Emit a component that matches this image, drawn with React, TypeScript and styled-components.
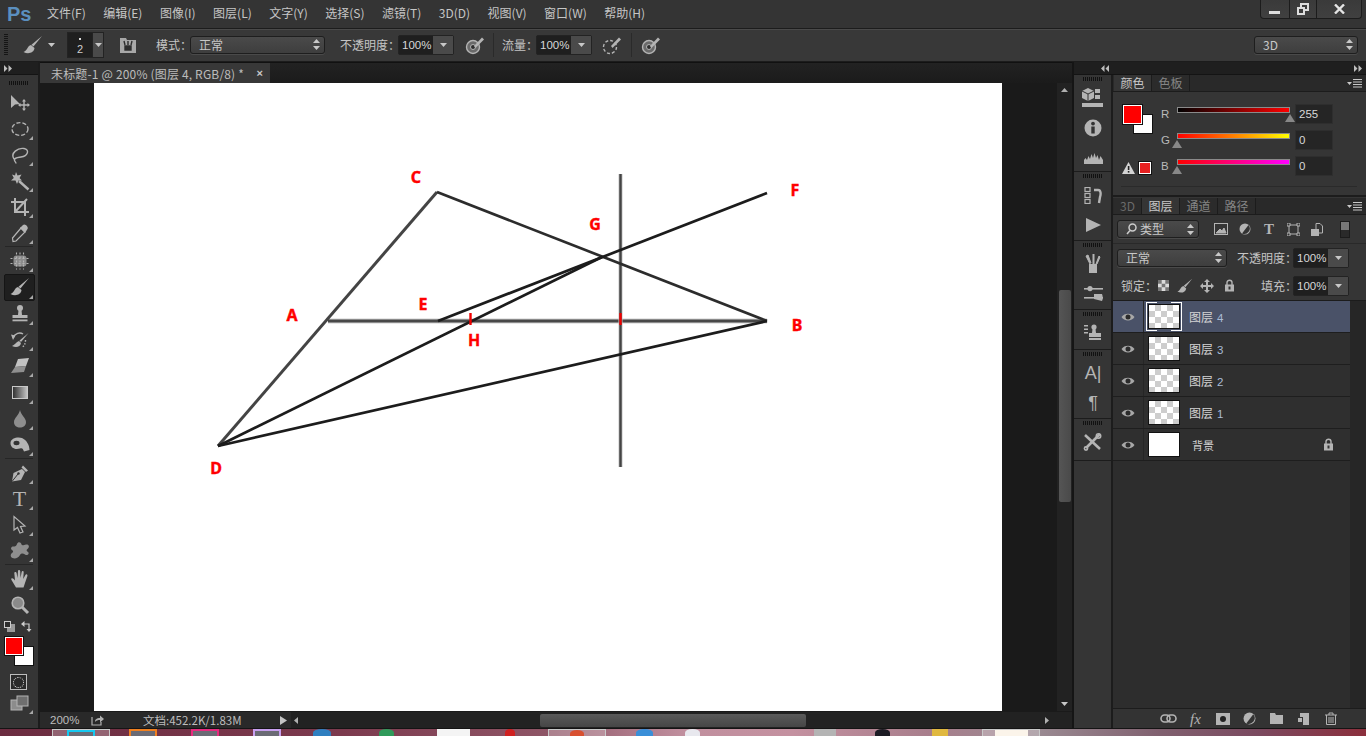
import React from 'react'
import styled, { createGlobalStyle } from 'styled-components'

const CJK = `"Noto Sans CJK SC", "Liberation Sans", sans-serif`

const GlobalStyle = createGlobalStyle`
  html, body { margin: 0; padding: 0; height: 100%; background: #1a1a1a; overflow: hidden; }
  #root { width: 1366px; height: 736px; }
  * { box-sizing: border-box; }
`

const Ink = '#b4b4b4'

type GlyphProps = { size?: number; children: React.ReactNode }

function Glyph({ size = 20, children }: GlyphProps) {
  return (
    <svg width={size} height={size} viewBox="0 0 20 20" fill={Ink} stroke="none">
      {children}
    </svg>
  )
}

const line = { fill: 'none', stroke: Ink, strokeWidth: 1.4 }

const brushPath = (
  <>
    <path d="M19 1 L10.5 11.5 L8.5 9.8 Z" />
    <path d="M8 10 C4 11 5 15 0.5 17 C5 19.5 11 18 11.5 13 Z" />
  </>
)

const toolGlyphs: Record<string, React.ReactNode> = {
  move: (
    <>
      <path d="M1 2 L1 15 L5 11.5 L10 11 Z" />
      <path d="M14 7 L14 17 M9 12 L19 12" {...line} />
      <path d="M14 6 L12 8.5 L16 8.5 Z M14 18 L12 15.5 L16 15.5 Z M8 12 L10.5 10 L10.5 14 Z M20 12 L17.5 10 L17.5 14 Z" />
    </>
  ),
  marquee: <ellipse cx="10" cy="10" rx="8" ry="6.4" fill="none" stroke={Ink} strokeWidth="1.4" strokeDasharray="4 2" />,
  lasso: <path d="M4 14 C0 8 8 2.5 14 3.5 C20 4.5 18 11 11 12 C8 12.5 5 12.5 4.5 14.5 C4 16.5 6 16.5 6 18.5" {...line} />,
  wand: (
    <>
      <path d="M9 10 L18.5 18.5" stroke={Ink} strokeWidth="2.4" />
      <path d="M6 1 L7.5 4.5 L11.5 3.5 L9.5 7 L12 9.5 L8.5 9.5 L7 13 L5.5 9.5 L1 9.5 L3.8 7 L2 3.5 L5 4.5 Z" />
    </>
  ),
  crop: <path d="M5 1 L5 15 L19 15 M1 5 L15 5 L15 19 M5 15 L17 2" {...line} strokeWidth={2} />,
  eyedropper: (
    <>
      <path d="M11 5 L15 9 L6 18 L3 18.5 L2.5 15 Z" fill="none" stroke={Ink} strokeWidth="1.2" />
      <path d="M10 5 L13 2 C15 0 19 4 17.5 6 L15 10 Z" />
    </>
  ),
  healing: (
    <>
      <rect x="3.5" y="4.5" width="13" height="11" rx="3" fill="#8c8c8c" />
      <path d="M0.5 7.5 H19.5 M0.5 12.5 H19.5 M6.5 1.5 V18.5 M10 1.5 V18.5 M13.5 1.5 V18.5" stroke={Ink} strokeWidth="1.1" strokeDasharray="2 2" fill="none" />
    </>
  ),
  brush: brushPath,
  stamp: (
    <>
      <circle cx="10" cy="4" r="3" />
      <path d="M8.5 6 H11.5 L12 11 H17.5 V14 H2.5 V11 H8 Z" />
      <rect x="2.5" y="15.5" width="15" height="1.8" />
    </>
  ),
  history: (
    <>
      <path d="M18.5 3 L11 12 L9.5 10.5 Z" />
      <path d="M9 11 C6 12 6 14 2 16 C6 18 10.5 17 11 13 Z" />
      <path d="M3 8 C5 3 10 2 13 4" {...line} />
      <path d="M1 4.5 L5.5 5.5 L3 10 Z" />
      <path d="M15.5 10 C15.5 14 14 16 12 17.5" {...line} strokeDasharray="1.5 1.5" />
    </>
  ),
  eraser: (
    <>
      <path d="M8 3 L19 2 L16 10 L5 11 Z" fill="#c2c2c2" />
      <path d="M5 11 L16 10 L14 16 L1 17 Z" fill="#8f8f8f" />
    </>
  ),
  gradient: (
    <>
      <defs>
        <linearGradient id="toolGrad" x1="0" x2="1">
          <stop offset="0" stopColor="#2c2c2c" />
          <stop offset="1" stopColor="#c8c8c8" />
        </linearGradient>
      </defs>
      <rect x="2.5" y="3.5" width="15" height="12" fill="url(#toolGrad)" stroke="#c8c8c8" />
    </>
  ),
  drop: <path d="M10 1 C11 6 16 9 16 13 C16 17 13 18.5 10 18.5 C7 18.5 4 17 4 13 C4 9 9 6 10 1 Z" fill="#8e8e8e" />,
  smudge: (
    <>
      <path d="M0.5 8 C0.5 3 8 1.5 12 3 C16.5 5 19.5 10 19.5 15 L14 16.5 C13 13.5 12 12.5 10 13.5 C5 15 0.5 13 0.5 8 Z" />
      <ellipse cx="6.5" cy="8" rx="3" ry="2.2" fill="#333" />
    </>
  ),
  pen: (
    <>
      <path d="M12 6 L15 9 L11 17 L2 18.5 L3.5 10 Z" />
      <path d="M13 2.5 L18 7.5 L16 9 L11.5 4.5 Z" />
      <path d="M2 18.5 L8 11" stroke="#333" strokeWidth="1" />
      <circle cx="8.5" cy="10.5" r="1.2" fill="#333" />
    </>
  ),
  path: <path d="M4 1.5 L4 15 L7.5 12.5 L10 18 L13 17 L10.5 11.5 L15 11 Z" fill="#333" stroke={Ink} strokeWidth="1.2" />,
  shape: (
    <path d="M7 3 C8 0.5 11 1 11.5 3.5 C12 5 14 4 16 3.5 C19 3 20 6 17.5 8 C16 9 16.5 10 18 11 C20 13 17 15 15 13.5 C13 12 11 12 10 14 C8.5 17 5 18 2.5 17 C0 16 0.5 13 2 12 C3.5 11 3.5 10 2 9 C0 7.5 1.5 5 4 5.5 C5.5 5.8 6.5 4.5 7 3 Z" fill="#8e8e8e" />
  ),
  hand: (
    <path d="M6 18.5 L1.5 11 C0.5 9 2.5 8.5 3.7 10 L5 11.5 L4.3 4 C4.3 2.5 6.4 2.5 6.6 4 L7.5 9 L8 2 C8 0.5 10 0.5 10.2 2 L10.5 9 L11.7 2.8 C12 1.4 13.8 1.8 13.7 3.3 L13.2 10 L15.4 6 C16.1 4.8 17.8 5.4 17.4 7 L15 14 L13.5 18.5 Z" />
  ),
  zoom: (
    <>
      <circle cx="8" cy="8" r="5.8" fill="#8a8a8a" stroke={Ink} strokeWidth="1.6" />
      <path d="M12 12 L18 18" stroke={Ink} strokeWidth="3" />
    </>
  ),
  screen: (
    <>
      <rect x="1" y="7" width="11" height="10" fill="#8c8c8c" stroke={Ink} strokeWidth="1" />
      <rect x="7" y="3" width="11" height="10" fill="#6f6f6f" stroke={Ink} strokeWidth="1" />
    </>
  ),
}

type ToolSpec = { id: string; corner?: boolean; active?: boolean; text?: string }

const toolGroups: ToolSpec[][] = [
  [
    { id: 'move' },
    { id: 'marquee', corner: true },
    { id: 'lasso', corner: true },
    { id: 'wand', corner: true },
    { id: 'crop', corner: true },
    { id: 'eyedropper', corner: true },
  ],
  [
    { id: 'healing', corner: true },
    { id: 'brush', corner: true, active: true },
    { id: 'stamp', corner: true },
    { id: 'history', corner: true },
    { id: 'eraser', corner: true },
    { id: 'gradient', corner: true },
    { id: 'drop', corner: true },
    { id: 'smudge', corner: true },
  ],
  [
    { id: 'pen', corner: true },
    { id: 'type', corner: true, text: 'T' },
    { id: 'path', corner: true },
    { id: 'shape', corner: true },
  ],
  [{ id: 'hand', corner: true }, { id: 'zoom' }],
]

const Shell = styled.div`
  width: 1366px;
  height: 736px;
  display: flex;
  flex-direction: column;
  overflow: hidden;
  font-family: ${CJK};
  font-size: 12px;
  color: #c6c6c6;
  background: #353535;
`

const MenuBar = styled.div`
  height: 29px;
  flex: none;
  display: flex;
  align-items: flex-start;
  background: #343434;
  border-bottom: 1px solid #1c1c1c;
`

const PsLogo = styled.div`
  width: 47px;
  padding: 2px 0 0 7px;
  font: bold 20px/24px "Liberation Sans", sans-serif;
  color: #5b8fbf;
  letter-spacing: 0;
`

const MenuList = styled.div`
  display: flex;
  gap: 17.5px;
  padding-top: 4px;
  line-height: 18px;
`

const MenuItem = styled.span`
  white-space: nowrap;
  font-size: 12px;
`

const WindowControls = styled.div`
  margin-left: auto;
  margin-right: 4px;
  width: 102px;
  height: 19px;
  display: grid;
  grid-template-columns: 28px 27px 1fr;
  border: 1px solid #1c1c1c;
  border-top: 0;
  border-radius: 0 0 4px 4px;
  background: linear-gradient(#3a3a3a, #404040);
`

const WindowButton = styled.div`
  display: flex;
  align-items: center;
  justify-content: center;
  & + & {
    border-left: 1px solid #1c1c1c;
  }
`

const OptionsBar = styled.div`
  height: 33px;
  flex: none;
  display: flex;
  align-items: center;
  padding-bottom: 2px;
  background: #383838;
  border-top: 1px solid #4a4a4a;
  border-bottom: 1px solid #1c1c1c;
`

const Grip = styled.div`
  width: 4px;
  height: 22px;
  margin-left: 4px;
  background: repeating-linear-gradient(#151515 0 1px, transparent 1px 2px);
`

const Spot = styled.div<{ $left: number; $width: number }>`
  margin-left: ${p => p.$left}px;
  width: ${p => p.$width}px;
  flex: none;
  display: flex;
  align-items: center;
  justify-content: center;
`

const Label = styled.span<{ $left: number }>`
  margin-left: ${p => p.$left}px;
  flex: none;
  white-space: nowrap;
  color: #c4c4c4;
`

const SizeBox = styled.div`
  width: 26px;
  height: 26px;
  margin-left: 10px;
  background: #1f1f1f;
  border: 1px solid #232323;
  display: flex;
  flex-direction: column;
  align-items: center;
  color: #cfcfcf;
  font: 11px/12px "Liberation Sans", sans-serif;
  padding-top: 1px;
`

const SizeDot = styled.i`
  width: 2px;
  height: 2px;
  margin: 4px 0 3px;
  background: #ddd;
`

const SizeCaret = styled.div`
  width: 11px;
  height: 26px;
  flex: none;
  background: #4a4a4a;
  border: 1px solid #232323;
  border-left: 0;
  display: flex;
  align-items: center;
  justify-content: center;
`

const Select = styled.div<{ $left?: number; $width: number; $height?: number }>`
  margin-left: ${p => p.$left ?? 0}px;
  width: ${p => p.$width}px;
  height: ${p => p.$height ?? 18}px;
  flex: none;
  display: flex;
  align-items: center;
  justify-content: space-between;
  padding: 0 4px 0 8px;
  border: 1px solid #1e1e1e;
  border-radius: 3px;
  background: linear-gradient(#4a4a4a, #3e3e3e);
  box-shadow: 0 1px 0 #4a4a4a;
  color: #c8c8c8;
  line-height: 16px;
  white-space: nowrap;
`

const ComboField = styled.div<{ $left?: number }>`
  margin-left: ${p => p.$left ?? 0}px;
  flex: none;
  width: 56px;
  height: 20px;
  display: flex;
  border: 1px solid #232323;
  border-radius: 2px;
  background: #1f1f1f;
`

const ComboValue = styled.span`
  flex: 1;
  padding-left: 3px;
  font: 11.5px/18px "Liberation Sans", sans-serif;
  color: #d8d8d8;
`

const ComboCaret = styled.span`
  width: 20px;
  background: #4a4a4a;
  display: flex;
  align-items: center;
  justify-content: center;
`

const OptionDivider = styled.i<{ $left: number }>`
  margin-left: ${p => p.$left}px;
  width: 1px;
  height: 24px;
  flex: none;
  background: #2a2a2a;
`

const Stepper = () => (
  <svg width="7" height="11" viewBox="0 0 7 11" fill="#c8c8c8">
    <path d="M3.5 0 L7 4 H0 Z M3.5 11 L0 7 H7 Z" />
  </svg>
)

const Caret = () => (
  <svg width="7" height="4" viewBox="0 0 7 4" fill="#c8c8c8">
    <path d="M0 0 H7 L3.5 4 Z" />
  </svg>
)

const AirbrushDisc = ({ crossed }: { crossed?: boolean }) => (
  <svg width="20" height="20" viewBox="0 0 20 20">
    <circle cx="8" cy="12" r="6.5" fill={crossed ? 'none' : '#6a6a6a'} stroke={Ink} strokeWidth="1.4" strokeDasharray={crossed ? '3 2' : undefined} />
    {!crossed && <circle cx="8" cy="12" r="2.5" fill="#2e2e2e" stroke={Ink} />}
    <path d="M9 11 L17 2.5 L19 4.5 L10.5 13 Z" fill={Ink} />
  </svg>
)

const Workspace = styled.div`
  height: 666px;
  flex: none;
  display: flex;
`

const ToolColumn = styled.div`
  width: 40px;
  flex: none;
  display: flex;
  flex-direction: column;
  background: #353535;
  border-right: 2px solid #1c1c1c;
`

const CollapseStrip = styled.div<{ $align?: string }>`
  height: 13px;
  flex: none;
  display: flex;
  align-items: center;
  justify-content: ${p => p.$align ?? 'flex-start'};
  padding: 0 4px;
  background: #1f1f1f;
  border-bottom: 1px solid #141414;
`

const StripGap = styled.span<{ $width?: number }>`
  width: ${p => p.$width ?? 0}px;
`

const DoubleArrow = ({ left }: { left?: boolean }) => (
  <svg width="8" height="7" viewBox="0 0 8 7" fill="#bdbdbd">
    {left ? <path d="M3.5 0 V7 L0 3.5 Z M8 0 V7 L4.5 3.5 Z" /> : <path d="M0 0 V7 L3.5 3.5 Z M4.5 0 V7 L8 3.5 Z" />}
  </svg>
)

const GripRow = styled.div<{ $height?: number }>`
  height: ${p => p.$height ?? 15}px;
  flex: none;
  display: flex;
  align-items: center;
  justify-content: center;
  &::before {
    content: '';
    width: 20px;
    height: 4px;
    background: repeating-linear-gradient(90deg, #111 0 1px, transparent 1px 2px);
  }
`

const ToolCell = styled.div<{ $active?: boolean; $height: number }>`
  height: ${p => p.$height}px;
  margin: 0 3px 0 4px;
  flex: none;
  display: flex;
  align-items: center;
  justify-content: center;
  position: relative;
  border-radius: 2px;
  background: ${p => (p.$active ? '#1f1f1f' : 'transparent')};
  border: 1px solid ${p => (p.$active ? '#151515' : 'transparent')};
  &[data-corner='true']::after {
    content: '';
    position: absolute;
    right: 1px;
    bottom: 1px;
    border-style: solid;
    border-width: 0 0 4px 4px;
    border-color: transparent transparent #a8a8a8 transparent;
  }
`

const ToolSeparator = styled.div`
  height: 2px;
  margin: 0 5px;
  flex: none;
  border-top: 1px solid #262626;
`

const SerifT = styled.span<{ $small?: boolean }>`
  font: ${p => (p.$small ? 'bold 15px/14px' : '22px/22px')} "Liberation Serif", serif;
  color: ${Ink};
`

const SwapRow = styled.div`
  height: 14px;
  margin-top: 1px;
  padding: 0 6px 0 4px;
  display: flex;
  align-items: center;
  justify-content: space-between;
  flex: none;
`

const SwatchStack = styled.div`
  width: 30px;
  height: 30px;
  margin: 3px 0 0 4px;
  flex: none;
  position: relative;
`

const Swatch = styled.div<{ $size: number; $color: string; $bottom?: boolean }>`
  position: absolute;
  width: ${p => p.$size}px;
  height: ${p => p.$size}px;
  background: ${p => p.$color};
  border: 1px solid #111;
  box-shadow: inset 0 0 0 1px #fff;
  ${p => (p.$bottom ? 'right: 0; bottom: 0;' : 'left: 0; top: 0; z-index: 1;')}
`

const QuickMask = styled.div`
  width: 17px;
  height: 16px;
  margin: 8px 0 0 10px;
  flex: none;
  background: #2a2a2a;
  border: 1px solid #bdbdbd;
  display: flex;
  align-items: center;
  justify-content: center;
  &::before {
    content: '';
    width: 9px;
    height: 9px;
    border-radius: 50%;
    border: 1px dotted #e0e0e0;
  }
`

const DocArea = styled.div`
  width: 1034px;
  flex: none;
  display: flex;
  flex-direction: column;
  background: #1a1a1a;
  border-right: 2px solid #151515;
`

const TabBar = styled.div`
  height: 21px;
  flex: none;
  display: flex;
  background: linear-gradient(#222, #1b1b1b);
  border-top: 1px solid #111;
`

const DocTab = styled.div`
  width: 230px;
  padding: 0 7px 0 11px;
  display: flex;
  align-items: center;
  justify-content: space-between;
  background: #383838;
  color: #bcbcbc;
  font-size: 12px;
  letter-spacing: 0.17px;
  white-space: nowrap;
`

const TabClose = styled.span`
  font: bold 11px/12px "Liberation Sans", sans-serif;
  color: #c8c8c8;
`

const Viewport = styled.div`
  height: 628px;
  flex: none;
  display: flex;
  padding-left: 54px;
`

const Paper = styled.div`
  width: 908px;
  height: 628px;
  flex: none;
  background: #fff;
`

const VScroll = styled.div`
  margin-left: 55px;
  width: 15px;
  flex: none;
  display: flex;
  flex-direction: column;
  align-items: center;
  background: #222;
  padding-top: 5px;
`

const VThumb = styled.div`
  width: 12px;
  height: 212px;
  margin-top: 198px;
  border-radius: 2px;
  background: linear-gradient(90deg, #555, #4a4a4a);
`

const VArrow = styled.div`
  margin-top: auto;
  margin-bottom: 5px;
  display: flex;
`

const StatusBar = styled.div`
  height: 17px;
  flex: none;
  display: flex;
  align-items: center;
  background: #292929;
  color: #bdbdbd;
  font-size: 11.5px;
  border-top: 1px solid #1a1a1a;
`

const StatusZoom = styled.span`
  width: 51px;
  padding-left: 10px;
  font: 11.5px "Liberation Sans", sans-serif;
`

const StatusInfo = styled.span`
  width: 137px;
  margin-left: 38px;
  white-space: nowrap;
`

const HTrack = styled.div`
  margin-left: 4px;
  flex: 1;
  height: 16px;
  display: flex;
  align-items: center;
  background: #222;
  padding: 0 3px;
`

const HThumb = styled.div`
  width: 266px;
  height: 13px;
  margin-left: 242px;
  border-radius: 2px;
  background: linear-gradient(#5a5a5a, #464646);
`

const HEnd = styled.div`
  margin-left: auto;
  margin-right: 20px;
  display: flex;
`

const RightDock = styled.div`
  flex: 1;
  display: flex;
  flex-direction: column;
  background: #353535;
`

const DockBody = styled.div`
  flex: 1;
  display: flex;
`

const IconDock = styled.div`
  width: 39px;
  flex: none;
  display: flex;
  flex-direction: column;
  border-right: 2px solid #1c1c1c;
  background: #353535;
`

const DockGroup = styled.div<{ $height: number }>`
  height: ${p => p.$height}px;
  flex: none;
  display: flex;
  flex-direction: column;
  border-bottom: 1px solid #1c1c1c;
`

const DockCell = styled.div`
  height: 30px;
  flex: none;
  display: flex;
  align-items: center;
  justify-content: center;
  padding-left: 1px;
`

const DockLetter = styled.span`
  font: 18px/20px "Liberation Sans", sans-serif;
  color: ${Ink};
`

const Panels = styled.div`
  flex: 1;
  display: flex;
  flex-direction: column;
  background: #353535;
`

const ColorPanel = styled.section`
  height: 122px;
  flex: none;
  display: flex;
  flex-direction: column;
  border-bottom: 2px solid #1c1c1c;
`

const PanelTabs = styled.div`
  height: 17px;
  flex: none;
  display: flex;
  align-items: stretch;
  background: #292929;
  border-bottom: 1px solid #1c1c1c;
  padding-left: 1px;
`

const PanelTab = styled.div<{ $active?: boolean; $faded?: boolean }>`
  width: ${p => (p.$faded ? 28 : 38)}px;
  display: flex;
  align-items: center;
  justify-content: center;
  font-size: 12px;
  line-height: 16px;
  background: ${p => (p.$active ? '#353535' : '#2b2b2b')};
  border-right: 1px solid #1c1c1c;
  color: ${p => (p.$active ? '#c8c8c8' : p.$faded ? '#6a6a6a' : '#858585')};
`

const PanelMenu = styled.div`
  margin-left: auto;
  padding-right: 4px;
  display: flex;
  align-items: center;
`

const ColorBody = styled.div`
  flex: 1;
  display: grid;
  grid-template-columns: 36px 1fr;
  padding: 12px 0 0 9px;
  position: relative;
`

const ColorChips = styled.div`
  display: flex;
  flex-direction: column;
`

const BigSwatches = styled.div`
  width: 31px;
  height: 30px;
  position: relative;
`

const GamutRow = styled.div`
  margin-top: 27px;
  display: flex;
  align-items: center;
  gap: 3px;
`

const GamutChip = styled.div`
  width: 14px;
  height: 14px;
  background: #e62020;
  border: 1px solid #111;
  box-shadow: inset 0 0 0 1px #fff;
`

const SliderList = styled.div`
  display: flex;
  flex-direction: column;
  gap: 6px;
`

const SliderRow = styled.div`
  height: 20px;
  display: flex;
  gap: 6px;
`

const SliderName = styled.span`
  width: 10px;
  padding-top: 3px;
  margin-left: 3px;
  font: 11.5px/14px "Liberation Sans", sans-serif;
  color: #b9b9b9;
`

const SliderTrack = styled.div<{ $ramp: string }>`
  width: 113px;
  height: 6px;
  margin-top: 3px;
  position: relative;
  border: 1px solid #8a8a8a;
  background: linear-gradient(90deg, ${p => p.$ramp});
`

const SliderKnob = styled.i<{ $end?: boolean }>`
  position: absolute;
  top: 6px;
  ${p => (p.$end ? 'right: -6px;' : 'left: -6px;')}
  width: 0;
  height: 0;
  border-left: 5px solid transparent;
  border-right: 5px solid transparent;
  border-bottom: 8px solid #888;
`

const NumberField = styled.div`
  width: 38px;
  height: 20px;
  margin-left: -1px;
  background: #252525;
  border: 1px solid #2e2e2e;
  padding-left: 3px;
  font: 11.5px/18px "Liberation Sans", sans-serif;
  color: #d8d8d8;
`

const PanelRule = styled.i`
  position: absolute;
  left: 8px;
  right: 9px;
  bottom: 8px;
  height: 1px;
  background: #2a2a2a;
`

const LayersPanel = styled.section`
  margin-top: 1px;
  flex: 1;
  display: flex;
  flex-direction: column;
  min-height: 0;
`

const ToolRow = styled.div<{ $height: number; $line?: boolean }>`
  height: ${p => p.$height}px;
  flex: none;
  display: flex;
  align-items: center;
  padding: 0 0 0 4px;
  border-bottom: 1px solid ${p => (p.$line ? '#292929' : 'transparent')};
`

const FilterIcon = styled.div<{ $first?: boolean }>`
  width: 24px;
  margin-left: ${p => (p.$first ? 10 : 0)}px;
  display: flex;
  justify-content: center;
  flex: none;
`

const SwitchLamp = styled.div`
  width: 10px;
  height: 17px;
  margin-left: 11px;
  border: 1px solid #1c1c1c;
  background: linear-gradient(#777 0 50%, #2a2a2a 50%);
`

const FilterLabel = styled.span`
  display: flex;
  align-items: center;
  gap: 3px;
`

const LockLabel = styled.span`
  width: 35px;
  padding-left: 4px;
  flex: none;
  white-space: nowrap;
  overflow: visible;
`

const LockIcon = styled.span`
  width: 22px;
  flex: none;
  display: flex;
  justify-content: center;
`

const LayerArea = styled.div`
  flex: 1;
  display: flex;
  min-height: 0;
  border-top: 1px solid #1c1c1c;
`

const LayerList = styled.div`
  width: 237px;
  flex: none;
  display: flex;
  flex-direction: column;
  background: #2d2d2d;
`

const LayerRow = styled.div<{ $selected?: boolean }>`
  height: 32px;
  flex: none;
  display: flex;
  align-items: center;
  border-bottom: 1px solid #1e1e1e;
  background: ${p => (p.$selected ? '#4a5268' : '#2f2f2f')};
`

const EyeCell = styled.div`
  width: 31px;
  height: 100%;
  flex: none;
  display: flex;
  align-items: center;
  justify-content: center;
  border-right: 1px solid #262626;
`

const bracket = (x: string, y: string, w: string, h: string) =>
  `linear-gradient(#fff, #fff) ${x} ${y} / ${w} ${h} no-repeat`

const Thumb = styled.div<{ $plain?: boolean; $selected?: boolean }>`
  width: 32px;
  height: 25px;
  margin-left: 4px;
  flex: none;
  border: 1px solid #111;
  position: relative;
  background: ${p =>
    p.$plain ? '#fff' : 'repeating-conic-gradient(#cdcdcd 0 25%, #fff 0 50%) 0 0 / 12px 12px'};
  ${p =>
    p.$selected
      ? `&::after {
          content: '';
          position: absolute;
          inset: -3px;
          background: ${[
            bracket('0', '0', '11px', '1px'),
            bracket('100%', '0', '11px', '1px'),
            bracket('0', '100%', '11px', '1px'),
            bracket('100%', '100%', '11px', '1px'),
            bracket('0', '0', '1px', '100%'),
            bracket('100%', '0', '1px', '100%'),
          ].join(', ')};
        }`
      : ''}
`

const LayerName = styled.span`
  margin-left: 9px;
  color: #d4d4d4;
  white-space: nowrap;
`

const BackgroundName = styled(LayerName)`
  margin-left: 12px;
  font-size: 11px;
`

const LayerIndex = styled.span`
  margin-left: 4px;
  font: 11.5px "Liberation Sans", sans-serif;
  color: #a9bcd6;
`

const LayerLock = styled.span`
  margin-left: auto;
  margin-right: 16px;
  display: flex;
`

const LayerScroll = styled.div`
  flex: 1;
  background: #262626;
`

const LayerFooter = styled.div`
  height: 20px;
  flex: none;
  padding-left: 47px;
  display: flex;
  align-items: center;
  gap: 10px;
  background: #333;
  border-top: 1px solid #1c1c1c;
`

const FooterIcon = styled.span`
  width: 17px;
  flex: none;
  display: flex;
  justify-content: center;
  font: italic 15px/16px "Liberation Serif", serif;
  color: ${Ink};
`

const Taskbar = styled.div`
  height: 8px;
  flex: none;
  display: flex;
  overflow: hidden;
  border-top: 1px solid #141414;
  background: linear-gradient(90deg, #6b2c40 0, #7c3a4e 25%, #8e5566 40%, #c08f9e 50%, #c491a0 58%, #a87e8c 68%, #9a8a92 76%, #80606f 85%, #7b4a60 92%, #8b2f3c 100%);
`

const TaskThumb = styled.div<{ $left: number; $color: string }>`
  margin-left: ${p => p.$left}px;
  width: 28px;
  height: 7px;
  flex: none;
  border: 2px solid ${p => p.$color};
  border-bottom: 0;
  background: #6b6b75;
`

const TaskBlip = styled.div<{ $left: number; $width: number; $color: string; $round?: boolean }>`
  margin-left: ${p => p.$left}px;
  width: ${p => p.$width}px;
  height: 7px;
  flex: none;
  background: ${p => p.$color};
  border-radius: ${p => (p.$round ? '50% 50% 0 0' : '0')};
`

const TaskActive = styled.div<{ $left: number }>`
  margin-left: ${p => p.$left}px;
  width: 58px;
  flex: none;
  display: flex;
  justify-content: center;
  background: rgba(255, 255, 255, 0.25);
  border: 1px solid #c9c9c9;
  border-bottom: 0;
`

const menus = ['文件(F)', '编辑(E)', '图像(I)', '图层(L)', '文字(Y)', '选择(S)', '滤镜(T)', '3D(D)', '视图(V)', '窗口(W)', '帮助(H)']

const Eye = () => (
  <svg width="14" height="10" viewBox="0 0 14 10">
    <path d="M0.5 5 C3 0.5 11 0.5 13.5 5 C11 9.5 3 9.5 0.5 5 Z" fill="#a8a8a8" />
    <circle cx="7" cy="5" r="2.5" fill="#2b2b2b" />
  </svg>
)

const Padlock = ({ color = Ink }: { color?: string }) => (
  <svg width="11" height="13" viewBox="0 0 11 13" fill={color}>
    <path d="M3 6 V3.5 C3 0.5 8 0.5 8 3.5 V6" fill="none" stroke={color} strokeWidth="1.4" />
    <rect x="1" y="5.5" width="9" height="7" />
    <rect x="4.5" y="7.5" width="2" height="3" fill="#333" />
  </svg>
)

const MenuLines = () => (
  <svg width="15" height="9" viewBox="0 0 15 9" fill="#c8c8c8">
    <path d="M0 3 H5 L2.5 6 Z M6 0 H15 V1 H6 Z M6 2.5 H15 V3.5 H6 Z M6 5 H15 V6 H6 Z M6 7.5 H15 V8.5 H6 Z" />
  </svg>
)

const labels: [string, number, number][] = [
  ['C', 416, 183],
  ['A', 292, 321],
  ['E', 423, 310],
  ['H', 474, 346],
  ['D', 216, 474],
  ['G', 595, 230],
  ['F', 795, 196],
  ['B', 797, 331],
]

function Drawing() {
  return (
    <svg width="908" height="628" viewBox="94 83 908 628">
      <g style={{ filter: 'blur(0.7px)' }} fill="none" strokeLinecap="butt">
        <path d="M328 321 H767" stroke="#cfcfcf" strokeWidth="5" />
        <path d="M328 321 H767" stroke="#484848" strokeWidth="2.8" />
        <path d="M620.5 174 V467" stroke="#c4c4c4" strokeWidth="4" />
        <path d="M620.5 174 V467" stroke="#444" strokeWidth="2.4" />
        <path d="M437 192 L218 446" stroke="#444" strokeWidth="3" />
        <path d="M437 192 L767 321" stroke="#2c2c2c" strokeWidth="2.7" />
        <path d="M218 446 L767 321" stroke="#1c1c1c" strokeWidth="2.7" />
        <path d="M218 446 L602 257" stroke="#1c1c1c" strokeWidth="2.7" />
        <path d="M438 321 L767 193" stroke="#1c1c1c" strokeWidth="2.7" />
      </g>
      <path d="M470.5 313 V325 M620.5 313 V325" stroke="#f00000" strokeWidth="2.4" />
      {labels.map(([name, x, y]) => (
        <text
          key={name}
          x={x}
          y={y}
          textAnchor="middle"
          fill="#f00"
          stroke="#f00"
          strokeWidth="0.4"
          fontFamily='"Noto Sans", sans-serif'
          fontWeight="700"
          fontSize="16"
        >
          {name}
        </text>
      ))}
    </svg>
  )
}

export default function App() {
  return (
    <Shell>
      <GlobalStyle />
      <MenuBar>
        <PsLogo>Ps</PsLogo>
        <MenuList>
          {menus.map(m => (
            <MenuItem key={m}>{m}</MenuItem>
          ))}
        </MenuList>
        <WindowControls>
          <WindowButton>
            <svg width="12" height="12" viewBox="0 0 12 12" fill="#ddd">
              <rect x="0" y="8" width="11" height="3" />
            </svg>
          </WindowButton>
          <WindowButton>
            <svg width="12" height="12" viewBox="0 0 12 12" fill="none" stroke="#ddd" strokeWidth="2">
              <rect x="4" y="1" width="7" height="6" />
              <rect x="1" y="5" width="6" height="6" fill="#3c3c3c" />
            </svg>
          </WindowButton>
          <WindowButton>
            <svg width="11" height="10" viewBox="0 0 11 10" stroke="#e4e4e4" strokeWidth="2.4">
              <path d="M1 0.5 L10 9.5 M10 0.5 L1 9.5" />
            </svg>
          </WindowButton>
        </WindowControls>
      </MenuBar>

      <OptionsBar>
        <Grip />
        <Spot $left={13} $width={24}>
          <Glyph>{brushPath}</Glyph>
        </Spot>
        <Spot $left={0} $width={12}>
          <Caret />
        </Spot>
        <SizeBox>
          <SizeDot />2
        </SizeBox>
        <SizeCaret>
          <Caret />
        </SizeCaret>
        <Spot $left={15} $width={18}>
          <svg width="16" height="16" viewBox="0 0 16 16">
            <path d="M0 1 H6 L7 3 H16 V16 H0 Z" fill="#a8a8a8" />
            <path d="M4 4 L5 8 M8 4 V8 M12 4 L11 8 M5 9 H11 V13 H5 Z" stroke="#2e2e2e" strokeWidth="1.4" fill="#2e2e2e" />
          </svg>
        </Spot>
        <Label $left={19}>模式：</Label>
        <Select $left={-2} $width={135}>
          正常
          <Stepper />
        </Select>
        <Label $left={15}>不透明度：</Label>
        <ComboField $left={-2}>
          <ComboValue>100%</ComboValue>
          <ComboCaret>
            <Caret />
          </ComboCaret>
        </ComboField>
        <Spot $left={11} $width={20}>
          <AirbrushDisc />
        </Spot>
        <OptionDivider $left={8} />
        <Label $left={8}>流量：</Label>
        <ComboField $left={-2}>
          <ComboValue>100%</ComboValue>
          <ComboCaret>
            <Caret />
          </ComboCaret>
        </ComboField>
        <Spot $left={10} $width={20}>
          <AirbrushDisc crossed />
        </Spot>
        <OptionDivider $left={9} />
        <Spot $left={9} $width={20}>
          <AirbrushDisc />
        </Spot>
        <Select $left={593} $width={104}>
          3D
          <Stepper />
        </Select>
      </OptionsBar>

      <Workspace>
        <ToolColumn>
          <CollapseStrip>
            <DoubleArrow />
          </CollapseStrip>
          <GripRow />
          {toolGroups.map((group, gi) => (
            <React.Fragment key={gi}>
              {gi > 0 && <ToolSeparator />}
              {group.map(tool => (
                <ToolCell key={tool.id} $height={gi === 1 ? 26.3 : 26} $active={tool.active} data-corner={tool.corner ? 'true' : 'false'}>
                  {tool.text ? <SerifT>{tool.text}</SerifT> : <Glyph>{toolGlyphs[tool.id]}</Glyph>}
                </ToolCell>
              ))}
            </React.Fragment>
          ))}
          <SwapRow>
            <svg width="11" height="11" viewBox="0 0 11 11">
              <rect x="3" y="3" width="8" height="8" fill="#9a9a9a" />
              <rect x="0.5" y="0.5" width="6" height="6" fill="#2c2c2c" stroke="#ccc" />
            </svg>
            <svg width="11" height="11" viewBox="0 0 11 11" fill="none" stroke="#ccc" strokeWidth="1.2">
              <path d="M2 3 H8 V9" />
              <path d="M3.5 0 V6 L0 3 Z M5.5 8 H10.5 L8 11 Z" fill="#ccc" stroke="none" />
            </svg>
          </SwapRow>
          <SwatchStack>
            <Swatch $size={20} $color="#ff0000" />
            <Swatch $size={20} $color="#ffffff" $bottom />
          </SwatchStack>
          <QuickMask />
          <ToolCell $height={26} data-corner="true">
            <Glyph>{toolGlyphs.screen}</Glyph>
          </ToolCell>
        </ToolColumn>

        <DocArea>
          <TabBar>
            <DocTab>
              未标题-1 @ 200% (图层 4, RGB/8) *<TabClose>×</TabClose>
            </DocTab>
          </TabBar>
          <Viewport>
            <Paper>
              <Drawing />
            </Paper>
            <VScroll>
              <svg width="7" height="4" viewBox="0 0 7 4" fill="#b0b0b0">
                <path d="M3.5 0 L7 4 H0 Z" />
              </svg>
              <VThumb />
              <VArrow>
                <Caret />
              </VArrow>
            </VScroll>
          </Viewport>
          <StatusBar>
            <StatusZoom>200%</StatusZoom>
            <svg width="14" height="12" viewBox="0 0 14 12" fill="none" stroke="#b0b0b0" strokeWidth="1.2">
              <path d="M1 3 V11 H10 V8" />
              <path d="M4 8 C4 5 6 4 9 4 V1.5 L13 5 L9 8.5 V6 C7 6 5 6.5 4 8 Z" fill="#b0b0b0" stroke="none" />
            </svg>
            <StatusInfo>文档:452.2K/1.83M</StatusInfo>
            <svg width="7" height="9" viewBox="0 0 7 9" fill="#c4c4c4">
              <path d="M0 0 L7 4.5 L0 9 Z" />
            </svg>
            <HTrack>
              <svg width="4" height="7" viewBox="0 0 4 7" fill="#b0b0b0">
                <path d="M4 0 V7 L0 3.5 Z" />
              </svg>
              <HThumb />
              <HEnd>
                <svg width="4" height="7" viewBox="0 0 4 7" fill="#b0b0b0">
                  <path d="M0 0 V7 L4 3.5 Z" />
                </svg>
              </HEnd>
            </HTrack>
          </StatusBar>
        </DocArea>

        <RightDock>
          <CollapseStrip $align="space-between">
            <span />
            <DoubleArrow left />
            <StripGap $width={200} />
            <DoubleArrow />
          </CollapseStrip>
          <DockBody>
            <IconDock>
              <DockGroup $height={97}>
                <GripRow $height={8} />
                <DockCell>
                  <svg width="22" height="20" viewBox="0 0 22 20" fill={Ink}>
                    <path d="M6 0 L12 3 V10 L6 13 L0 10 V3 Z" />
                    <path d="M0 3 L6 6 L12 3 M6 6 V13" stroke="#333" fill="none" />
                    <rect x="13" y="1" width="5" height="4" />
                    <rect x="13" y="7" width="5" height="4" />
                    <rect x="0" y="15" width="21" height="4" />
                  </svg>
                </DockCell>
                <DockCell>
                  <svg width="18" height="18" viewBox="0 0 18 18">
                    <circle cx="9" cy="9" r="8.5" fill="#b4b4b4" />
                    <rect x="7.3" y="7.5" width="3.4" height="7" fill="#333" />
                    <circle cx="9" cy="4.6" r="1.9" fill="#333" />
                  </svg>
                </DockCell>
                <DockCell>
                  <svg width="19" height="11" viewBox="0 0 19 11" fill={Ink}>
                    <path d="M0 11 V7 L1.5 5 L3 7 L4.5 3 L6 6 L7.5 1 L9 5 L10.5 0 L12 5 L13.5 2 L15 7 L16.5 3 L19 7 V11 Z" />
                  </svg>
                </DockCell>
              </DockGroup>
              <DockGroup $height={69}>
                <GripRow $height={8} />
                <DockCell>
                  <svg width="18" height="17" viewBox="0 0 18 17" fill="none" stroke={Ink} strokeWidth="1.2">
                    <rect x="1" y="0.5" width="5" height="4" />
                    <rect x="1" y="6.5" width="5" height="4" />
                    <rect x="1" y="12.5" width="5" height="4" />
                    <path d="M10 3 H14 C17 3 17 7 16 10 L15 16" strokeWidth="2.4" />
                  </svg>
                </DockCell>
                <DockCell>
                  <svg width="15" height="14" viewBox="0 0 15 14" fill={Ink}>
                    <path d="M0 0 L15 7 L0 14 Z" />
                  </svg>
                </DockCell>
              </DockGroup>
              <DockGroup $height={69}>
                <GripRow $height={8} />
                <DockCell>
                  <svg width="16" height="20" viewBox="0 0 16 20" fill={Ink}>
                    <rect x="4" y="10" width="8" height="9" />
                    <path d="M5 10 L1 2 L3 1 L6 9 M8 10 V0 H9 V10 M11 10 L14 2 L15 3 L12 10" stroke={Ink} />
                  </svg>
                </DockCell>
                <DockCell>
                  <svg width="19" height="16" viewBox="0 0 19 16" fill={Ink}>
                    <rect x="0" y="2" width="19" height="1.6" />
                    <circle cx="6" cy="2.6" r="2.6" />
                    <rect x="0" y="11" width="19" height="1.6" />
                    <path d="M10 8 L18 8 C19 11 19 13 18 15 L10 13 Z" />
                  </svg>
                </DockCell>
              </DockGroup>
              <DockGroup $height={40}>
                <GripRow $height={8} />
                <DockCell>
                  <svg width="18" height="18" viewBox="0 0 18 18" fill={Ink}>
                    <path d="M0 1 H4 V2.4 H0 Z M0 4.5 H4 V5.9 H0 Z M0 8 H4 V9.4 H0 Z" />
                    <circle cx="10" cy="3" r="2.6" />
                    <path d="M8.5 5 H11.5 L12 9 H17 V13 H5 V9 H8 Z" />
                    <rect x="5" y="14" width="12" height="2" />
                  </svg>
                </DockCell>
              </DockGroup>
              <DockGroup $height={69}>
                <GripRow $height={8} />
                <DockCell>
                  <DockLetter>A|</DockLetter>
                </DockCell>
                <DockCell>
                  <DockLetter>¶</DockLetter>
                </DockCell>
              </DockGroup>
              <DockGroup $height={42}>
                <GripRow $height={8} />
                <DockCell>
                  <svg width="20" height="18" viewBox="0 0 20 18" fill="none" stroke={Ink} strokeWidth="2.6">
                    <path d="M2 2 L17 16" />
                    <path d="M17 1 L3 15" />
                    <circle cx="15.5" cy="3" r="2.2" strokeWidth="1.6" />
                    <circle cx="3" cy="15.5" r="1.6" strokeWidth="1.6" />
                  </svg>
                </DockCell>
              </DockGroup>
            </IconDock>

            <Panels>
              <ColorPanel>
                <PanelTabs>
                  <PanelTab $active>颜色</PanelTab>
                  <PanelTab>色板</PanelTab>
                  <PanelMenu>
                    <MenuLines />
                  </PanelMenu>
                </PanelTabs>
                <ColorBody>
                  <ColorChips>
                    <BigSwatches>
                      <Swatch $size={21} $color="#ff0000" />
                      <Swatch $size={20} $color="#ffffff" $bottom />
                    </BigSwatches>
                    <GamutRow>
                      <svg width="13" height="12" viewBox="0 0 13 12">
                        <path d="M6.5 0 L13 12 H0 Z" fill="#d4d4d4" />
                        <rect x="5.8" y="4" width="1.6" height="4" fill="#222" />
                        <rect x="5.8" y="9" width="1.6" height="1.6" fill="#222" />
                      </svg>
                      <GamutChip />
                    </GamutRow>
                  </ColorChips>
                  <SliderList>
                    <SliderRow>
                      <SliderName>R</SliderName>
                      <SliderTrack $ramp="#000, #f00">
                        <SliderKnob $end />
                      </SliderTrack>
                      <NumberField>255</NumberField>
                    </SliderRow>
                    <SliderRow>
                      <SliderName>G</SliderName>
                      <SliderTrack $ramp="#f00, #ff0">
                        <SliderKnob />
                      </SliderTrack>
                      <NumberField>0</NumberField>
                    </SliderRow>
                    <SliderRow>
                      <SliderName>B</SliderName>
                      <SliderTrack $ramp="#f00, #f0f">
                        <SliderKnob />
                      </SliderTrack>
                      <NumberField>0</NumberField>
                    </SliderRow>
                  </SliderList>
                  <PanelRule />
                </ColorBody>
              </ColorPanel>

              <LayersPanel>
                <PanelTabs>
                  <PanelTab $faded>3D</PanelTab>
                  <PanelTab $active>图层</PanelTab>
                  <PanelTab>通道</PanelTab>
                  <PanelTab>路径</PanelTab>
                  <PanelMenu>
                    <MenuLines />
                  </PanelMenu>
                </PanelTabs>
                <ToolRow $height={29} $line>
                  <Select $width={82}>
                    <FilterLabel>
                      <svg width="11" height="12" viewBox="0 0 11 12" fill="none" stroke="#ccc" strokeWidth="1.5">
                        <circle cx="6.5" cy="4.5" r="3.5" />
                        <path d="M4 7.5 L1 11" />
                      </svg>
                      类型
                    </FilterLabel>
                    <Stepper />
                  </Select>
                  <FilterIcon $first>
                    <svg width="14" height="12" viewBox="0 0 14 12" fill="none" stroke={Ink}>
                      <rect x="0.5" y="0.5" width="13" height="11" />
                      <path d="M2 10 L6 6 L8 8 L10 5 L12 10 Z" fill={Ink} />
                    </svg>
                  </FilterIcon>
                  <FilterIcon>
                    <svg width="12" height="12" viewBox="0 0 12 12">
                      <circle cx="6" cy="6" r="5.5" fill={Ink} />
                      <path d="M9.5 2 A5.5 5.5 0 0 1 3 10.5 Z" fill="#333" />
                    </svg>
                  </FilterIcon>
                  <FilterIcon>
                    <SerifT $small>T</SerifT>
                  </FilterIcon>
                  <FilterIcon>
                    <svg width="13" height="13" viewBox="0 0 13 13" fill="none" stroke={Ink}>
                      <rect x="2" y="2" width="9" height="9" />
                      <path d="M0 0 H3 V3 H0 Z M10 0 H13 V3 H10 Z M0 10 H3 V13 H0 Z M10 10 H13 V13 H10 Z" fill="#333" />
                    </svg>
                  </FilterIcon>
                  <FilterIcon>
                    <svg width="12" height="13" viewBox="0 0 12 13" fill="none" stroke={Ink}>
                      <path d="M5 6 V0.5 H9 L11.5 3 V10 H8" />
                      <rect x="0.5" y="6.5" width="7" height="6" fill={Ink} />
                    </svg>
                  </FilterIcon>
                  <SwitchLamp />
                </ToolRow>
                <ToolRow $height={28}>
                  <Select $width={110} $height={18}>
                    正常
                    <Stepper />
                  </Select>
                  <Label $left={10}>不透明度：</Label>
                  <ComboField $left={-4}>
                    <ComboValue>100%</ComboValue>
                    <ComboCaret>
                      <Caret />
                    </ComboCaret>
                  </ComboField>
                </ToolRow>
                <ToolRow $height={28}>
                  <LockLabel>锁定：</LockLabel>
                  <LockIcon>
                    <svg width="11" height="11" viewBox="0 0 11 11">
                      <rect width="11" height="11" fill="#dcdcdc" />
                      <path d="M0 0 H3.7 V3.7 H0 Z M7.3 0 H11 V3.7 H7.3 Z M3.7 3.7 H7.3 V7.3 H3.7 Z M0 7.3 H3.7 V11 H0 Z M7.3 7.3 H11 V11 H7.3 Z" fill="#777" />
                    </svg>
                  </LockIcon>
                  <LockIcon>
                    <Glyph size={16}>{brushPath}</Glyph>
                  </LockIcon>
                  <LockIcon>
                    <svg width="14" height="14" viewBox="0 0 14 14" fill={Ink}>
                      <path d="M7 0 L10 3 H8 V6 H11 V4 L14 7 L11 10 V8 H8 V11 H10 L7 14 L4 11 H6 V8 H3 V10 L0 7 L3 4 V6 H6 V3 H4 Z" />
                    </svg>
                  </LockIcon>
                  <LockIcon>
                    <Padlock />
                  </LockIcon>
                  <Label $left={21}>填充：</Label>
                  <ComboField $left={-4}>
                    <ComboValue>100%</ComboValue>
                    <ComboCaret>
                      <Caret />
                    </ComboCaret>
                  </ComboField>
                </ToolRow>
                <LayerArea>
                  <LayerList>
                    {['4', '3', '2', '1'].map(n => (
                      <LayerRow key={n} $selected={n === '4'}>
                        <EyeCell>
                          <Eye />
                        </EyeCell>
                        <Thumb $selected={n === '4'} />
                        <LayerName>
                          图层<LayerIndex>{n}</LayerIndex>
                        </LayerName>
                      </LayerRow>
                    ))}
                    <LayerRow>
                      <EyeCell>
                        <Eye />
                      </EyeCell>
                      <Thumb $plain />
                      <BackgroundName>背景</BackgroundName>
                      <LayerLock>
                        <Padlock />
                      </LayerLock>
                    </LayerRow>
                  </LayerList>
                  <LayerScroll />
                </LayerArea>
                <LayerFooter>
                  <FooterIcon>
                    <svg width="17" height="9" viewBox="0 0 17 9" fill="none" stroke={Ink} strokeWidth="1.6">
                      <rect x="1" y="1" width="9" height="7" rx="3.5" />
                      <rect x="7" y="1" width="9" height="7" rx="3.5" />
                    </svg>
                  </FooterIcon>
                  <FooterIcon>fx</FooterIcon>
                  <FooterIcon>
                    <svg width="14" height="12" viewBox="0 0 14 12">
                      <rect width="14" height="12" fill={Ink} />
                      <circle cx="7" cy="6" r="3" fill="#222" />
                    </svg>
                  </FooterIcon>
                  <FooterIcon>
                    <svg width="13" height="13" viewBox="0 0 12 12">
                      <circle cx="6" cy="6" r="5.5" fill={Ink} />
                      <path d="M9.5 2 A5.5 5.5 0 0 1 3 10.5 Z" fill="#333" />
                    </svg>
                  </FooterIcon>
                  <FooterIcon>
                    <svg width="13" height="11" viewBox="0 0 13 11" fill={Ink}>
                      <path d="M0 0 H5 L6 2 H13 V11 H0 Z" />
                    </svg>
                  </FooterIcon>
                  <FooterIcon>
                    <svg width="11" height="12" viewBox="0 0 11 12" fill={Ink}>
                      <path d="M2 0 H11 V12 H5 V4 H2 Z M0 5 H4 V9 H0 Z" />
                    </svg>
                  </FooterIcon>
                  <FooterIcon>
                    <svg width="12" height="13" viewBox="0 0 12 13" fill="none" stroke={Ink}>
                      <path d="M0 3 H12 M4 3 V1 H8 V3 M1.5 3 V12.5 H10.5 V3 M4 5 V11 M6 5 V11 M8 5 V11" />
                    </svg>
                  </FooterIcon>
                </LayerFooter>
              </LayersPanel>
            </Panels>
          </DockBody>
        </RightDock>
      </Workspace>

      <Taskbar>
        <TaskActive $left={52}>
          <TaskThumb $left={0} $color="#16c8f0" />
        </TaskActive>
        <TaskThumb $left={19} $color="#f08020" />
        <TaskThumb $left={34} $color="#e82a80" />
        <TaskThumb $left={34} $color="#c8a0f0" />
        <TaskBlip $left={32} $width={18} $color="#2f7fc0" $round />
        <TaskBlip $left={48} $width={15} $color="#2f9a5a" $round />
        <TaskBlip $left={43} $width={33} $color="#f4f4f4" />
        <TaskBlip $left={35} $width={10} $color="#d02020" $round />
        <TaskActive $left={33}>
          <TaskBlip $left={0} $width={14} $color="#d85030" $round />
        </TaskActive>
        <TaskBlip $left={30} $width={17} $color="#3a8fd8" $round />
        <TaskBlip $left={32} $width={15} $color="#e8e8ee" $round />
        <TaskBlip $left={114} $width={22} $color="#b4b4b4" />
        <TaskBlip $left={39} $width={15} $color="#1c1c24" $round />
        <TaskBlip $left={42} $width={16} $color="#e0b840" />
        <TaskActive $left={34}>
          <TaskBlip $left={0} $width={33} $color="#fbf4ea" />
        </TaskActive>
      </Taskbar>
    </Shell>
  )
}
